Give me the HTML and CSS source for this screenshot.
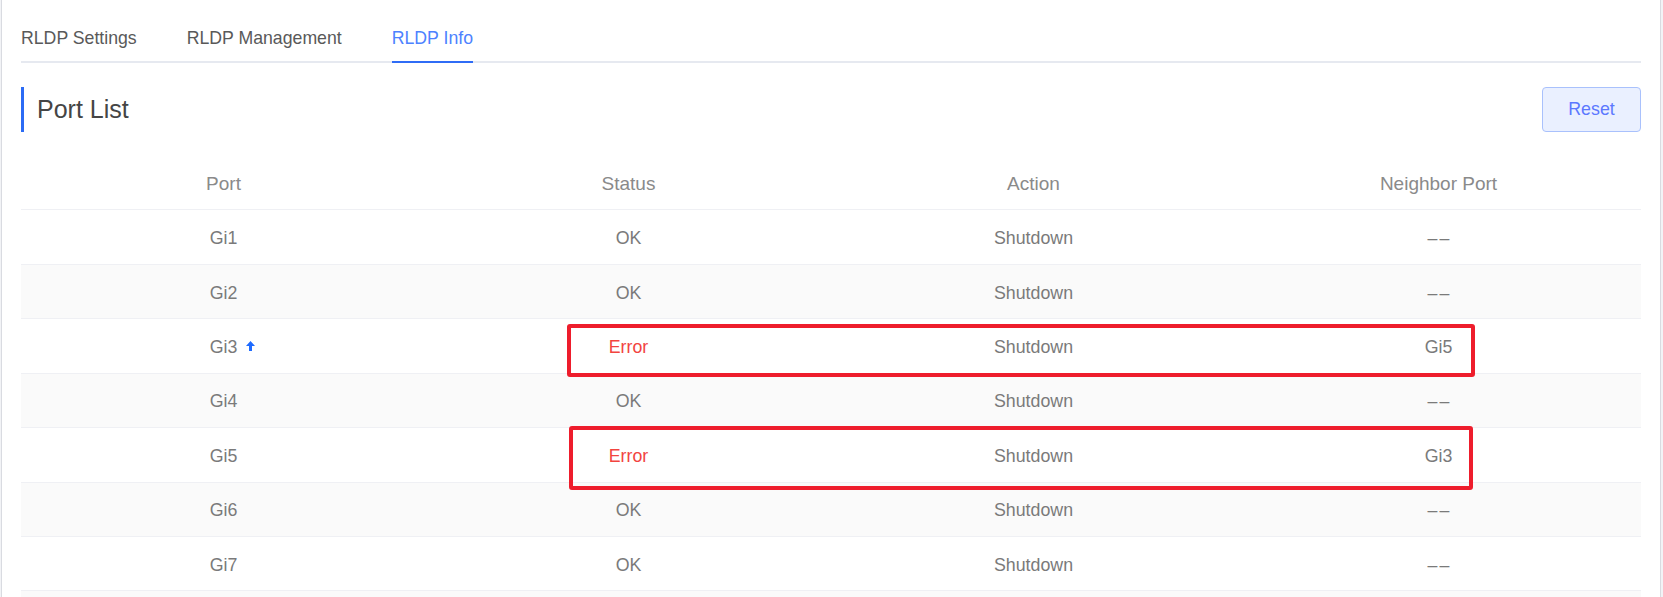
FILE: index.html
```html
<!DOCTYPE html>
<html>
<head>
<meta charset="utf-8">
<link rel="stylesheet" href="styles.css">
</head>
<body>
<div class="card">
  <nav class="tabs">
    <div class="tab">RLDP Settings</div>
    <div class="tab">RLDP Management</div>
    <div class="tab active">RLDP Info</div>
  </nav>
  <div class="section-head">
    <h2 class="title">Port List</h2>
    <button class="btn">Reset</button>
  </div>
  <div class="table">
    <div class="row head">
      <div class="cell">Port</div>
      <div class="cell">Status</div>
      <div class="cell">Action</div>
      <div class="cell">Neighbor Port</div>
    </div>
    <div class="row">
      <div class="cell">Gi1</div><div class="cell">OK</div><div class="cell">Shutdown</div><div class="cell dash">––</div>
    </div>
    <div class="row alt">
      <div class="cell">Gi2</div><div class="cell">OK</div><div class="cell">Shutdown</div><div class="cell dash">––</div>
    </div>
    <div class="row">
      <div class="cell"><span class="port">Gi3<svg class="uplink" width="9" height="10" viewBox="0 0 9 10"><path d="M4.5 0 L9 5 L6 5 L6 10 L3 10 L3 5 L0 5 Z" fill="#1f6bff"/></svg></span></div><div class="cell err">Error</div><div class="cell">Shutdown</div><div class="cell">Gi5</div>
    </div>
    <div class="row alt">
      <div class="cell">Gi4</div><div class="cell">OK</div><div class="cell">Shutdown</div><div class="cell dash">––</div>
    </div>
    <div class="row">
      <div class="cell">Gi5</div><div class="cell err">Error</div><div class="cell">Shutdown</div><div class="cell">Gi3</div>
    </div>
    <div class="row alt">
      <div class="cell">Gi6</div><div class="cell">OK</div><div class="cell">Shutdown</div><div class="cell dash">––</div>
    </div>
    <div class="row">
      <div class="cell">Gi7</div><div class="cell">OK</div><div class="cell">Shutdown</div><div class="cell dash">––</div>
    </div>
    <div class="row alt"></div>
    <div class="mark mark1"></div>
    <div class="mark mark2"></div>
  </div>
</div>
</body>
</html>
```
FILE: styles.css
```css
html, body {
  margin: 0;
  padding: 0;
}
body {
  background: #f2f3f6;
  padding: 0 2px 0 1px;
  font-family: "Liberation Sans", Arial, sans-serif;
  height: 597px;
  overflow: hidden;
}
.card {
  background: #fff;
  border-left: 1px solid #d9dbe1;
  border-right: 1px solid #d9dbe1;
  padding: 0 19px;
  height: 597px;
  box-sizing: border-box;
}
.tabs {
  display: flex;
  gap: 50px;
  border-bottom: 2px solid #e6e9f0;
}
.tab {
  font-size: 17.7px;
  line-height: 21px;
  padding: 28px 0 12px;
  color: #595959;
  border-bottom: 2px solid transparent;
  margin-bottom: -2px;
}
.tab.active {
  color: #4d82ff;
  border-bottom-color: #2f6cf6;
}
.section-head {
  margin-top: 24px;
  height: 45px;
  display: flex;
  align-items: center;
  justify-content: space-between;
}
.title {
  margin: 0;
  height: 45px;
  border-left: 3px solid #2b6bf5;
  padding-left: 13px;
  font-size: 25px;
  font-weight: normal;
  line-height: 45px;
  color: #454545;
}
.btn {
  width: 99px;
  height: 45px;
  background: #eaf0ff;
  border: 1px solid #a9c1fc;
  border-radius: 4px;
  color: #5c78ff;
  font-family: "Liberation Sans", Arial, sans-serif;
  font-size: 17.8px;
  padding: 0;
}
.table {
  position: relative;
  margin-top: 24px;
}
.row {
  display: grid;
  grid-template-columns: repeat(4, 1fr);
  height: 54.43px;
  box-sizing: border-box;
  padding-top: 3px;
  border-bottom: 1px solid #eff0f4;
  align-items: center;
  text-align: center;
  font-size: 17.8px;
  color: #7a7a7a;
}
.row.alt {
  background: #fafafa;
}
.row.head {
  color: #8a8a8a;
  font-size: 19px;
}
.cell.err {
  color: #f2443f;
}
.cell.dash {
  letter-spacing: 2px;
  text-indent: 2px;
}
.port {
  position: relative;
}
.uplink {
  position: absolute;
  left: calc(100% + 9px);
  top: 4px;
}
.mark {
  position: absolute;
  border: 4px solid #ee1d2c;
  border-radius: 3px;
  box-sizing: border-box;
}
.mark1 {
  left: 546px;
  top: 168px;
  width: 908px;
  height: 53px;
}
.mark2 {
  left: 548px;
  top: 270px;
  width: 904px;
  height: 64px;
}
```
